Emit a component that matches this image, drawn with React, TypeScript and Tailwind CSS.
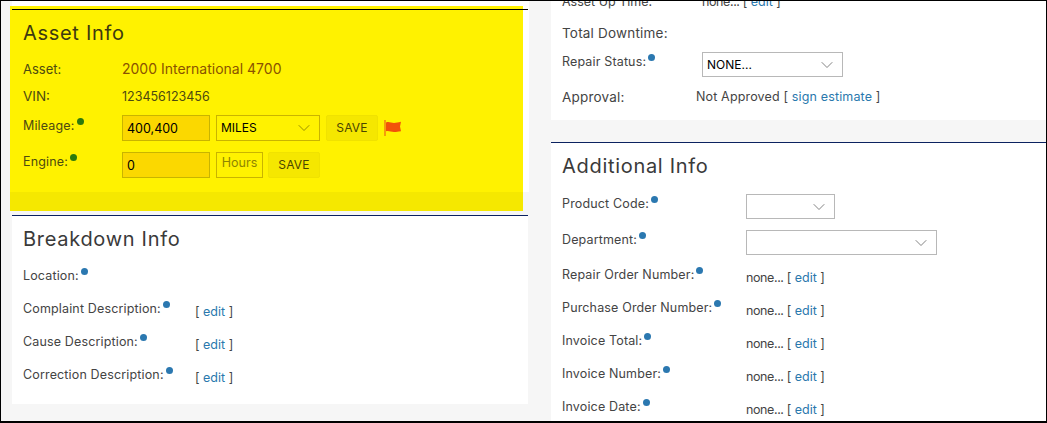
import { ChevronDown } from "lucide-react";

const FONT = "font-['Inter','Liberation_Sans',sans-serif]";

function Dot({ green }: { green?: boolean }) {
  return (
    <span
      className={`ml-[2px] inline-block h-[7px] w-[7px] -translate-y-[5px] rounded-full ${
        green ? "bg-[#2c7a0c]" : "bg-[#2b78b0]"
      }`}
    />
  );
}

function Label({ text, dot, green }: { text: string; dot?: boolean; green?: boolean }) {
  return (
    <span className="whitespace-nowrap tracking-[0.15px]">
      {text}
      {dot && <Dot green={green} />}
    </span>
  );
}

function Edit({ label = "edit" }: { label?: string }) {
  return (
    <span className="whitespace-nowrap text-[#444]">
      [ <span className="text-[#2a78ad]">{label}</span> ]
    </span>
  );
}

function None() {
  return <span className="tracking-[-0.4px] text-[#444]">none... </span>;
}

function Select({ value, w, yellow }: { value?: string; w: string; yellow?: boolean }) {
  return (
    <div
      className={`flex items-center justify-between pl-1 pr-[5px] text-[12px] text-black ${w} border ${
        yellow ? "h-[26px] border-[#c9b400]" : "h-[25px] border-[#b8b8b8]"
      }`}
    >
      <span>{value}</span>
      <ChevronDown size={20} strokeWidth={1.1} className={yellow ? "text-[#8f8500]" : "text-[#777]"} />
    </div>
  );
}

function EditRow({ label }: { label: string }) {
  return (
    <div className="flex h-[33px] items-start">
      <div className="w-[172px]">
        <Label text={label} dot />
      </div>
      <div className="pt-[3px]">
        <Edit />
      </div>
    </div>
  );
}

function SaveButton() {
  return (
    <div className="flex h-[26px] w-[52px] items-center justify-center rounded-[2px] border border-[#f0e200] bg-[#f5e700] text-[12px] tracking-[0.2px] text-[#4a4500]">
      SAVE
    </div>
  );
}

function AssetInfo() {
  return (
    <div className="ml-[11px] h-[213px] w-[517px] bg-[linear-gradient(white_191px,transparent_191px)] pt-[5px]">
      <div className="-ml-[2px] h-[205px] w-[513px] bg-[#fff200] text-[12.5px] text-[#4d4a10]">
        <div className="flex h-full flex-col pt-[3px]">
          <div className="ml-[2px] w-[516px] border-t border-black" />
          <h2 className="ml-[13px] mt-[10px] text-[20px] leading-[26px] tracking-[0.7px] text-[#3d3a10]">Asset Info</h2>
          <div className="ml-[13px] mt-[14px] flex h-[27px] leading-[18px]">
            <span className="w-[99px] text-[13px]">Asset:</span>
            <span className="text-[14px] text-[#8a5200]">2000 International 4700</span>
          </div>
          <div className="ml-[13px] flex h-[28px] leading-[19px]">
            <span className="w-[99px] text-[13.5px]">VIN:</span>
            <span>123456123456</span>
          </div>
          <div className="ml-[13px] flex h-[37px] items-start">
            <div className="w-[99px] pt-[2px]">
              <Label text="Mileage:" dot green />
            </div>
            <input
              readOnly
              value="400,400"
              className="h-[26px] w-[88px] border border-[#c9b400] bg-[#fbd800] px-1 text-[12.5px] text-black"
            />
            <div className="ml-[6px]">
              <Select value="MILES" w="w-[104px]" yellow />
            </div>
            <div className="ml-[6px]">
              <SaveButton />
            </div>
            <svg width="18" height="16" viewBox="0 0 18 16" className="ml-[6px] mt-[5px]">
              <path d="M1 0v16" stroke="#f07a10" strokeWidth="1.4" />
              <path d="M2 2.500c3-1.200 5 .5 8 .5 2.500 0 4-.6 7-1.200l-1 4.700 1 4.700c-3 .4-4.500 .8-7 .8-3 0-5-1.400-8-.8z" fill="#f2520a" />
            </svg>
          </div>
          <div className="ml-[13px] flex items-start">
            <div className="w-[99px] pt-[1px]">
              <Label text="Engine:" dot green />
            </div>
            <input
              readOnly
              value="0"
              className="h-[26px] w-[88px] border border-[#c9b400] bg-[#fbd800] px-1 text-[12.5px] text-black"
            />
            <div className="ml-[6px] flex h-[26px] w-[47px] items-center justify-center border border-[#c9b400] pb-[3px] text-[12.5px] text-[#8f8500]">
              Hours
            </div>
            <div className="ml-[5px]">
              <SaveButton />
            </div>
          </div>
          <div className="mt-auto h-[19px] bg-[#f5e800]" />
        </div>
      </div>
    </div>
  );
}

function BreakdownInfo() {
  return (
    <div className="ml-[11px] mt-[1px] h-[189px] w-[516px] border-t border-[#0b2260] bg-white pl-[11px] text-[12.5px] text-[#444]">
      <h2 className="mt-[10px] text-[20px] leading-[26px] tracking-[0.7px] text-[#3a3a3a]">Breakdown Info</h2>
      <div className="mt-[15px] h-[33px]">
        <Label text="Location:" dot />
      </div>
      <EditRow label="Complaint Description:" />
      <EditRow label="Cause Description:" />
      <EditRow label="Correction Description:" />
    </div>
  );
}

function TopRight() {
  return (
    <div className="h-[127px] bg-white pl-[11px] text-[12.5px] text-[#444]">
      <div className="-mt-[8px] flex h-[31px] items-start">
        <span className="w-[140px]">Asset Up Time:</span>
        <span>
          <None />
          <Edit />
        </span>
      </div>
      <div className="h-[28px] text-[13.5px] leading-[18px] tracking-[0.2px]">Total Downtime:</div>
      <div className="flex h-[36px] items-start">
        <div className="w-[140px] pt-[1px]">
          <Label text="Repair Status:" dot />
        </div>
        <Select value="NONE..." w="w-[141px]" />
      </div>
      <div className="flex h-[19px] items-center">
        <span className="w-[134px] text-[13.5px] tracking-[0.2px]">Approval:</span>
        <span className="tracking-[0.15px]">
          Not Approved <Edit label="sign estimate" />
        </span>
      </div>
    </div>
  );
}

function AdditionalInfo() {
  return (
    <div className="mt-[22px] h-[300px] border-t border-[#0b2260] bg-white pl-[11px] text-[12.5px] text-[#444]">
      <h2 className="mt-[10px] text-[20px] leading-[26px] tracking-[0.7px] text-[#3a3a3a]">Additional Info</h2>
      <div className="mt-[15px] flex h-[36px] items-start">
        <div className="w-[184px] pt-[1px]">
          <Label text="Product Code:" dot />
        </div>
        <Select w="w-[89px]" />
      </div>
      <div className="flex h-[36px] items-start">
        <div className="w-[184px] pt-[1px]">
          <Label text="Department:" dot />
        </div>
        <Select w="w-[191px]" />
      </div>
      {["Repair Order Number:", "Purchase Order Number:", "Invoice Total:", "Invoice Number:", "Invoice Date:"].map(
        (l) => (
          <div key={l} className="flex h-[33px] items-start">
            <div className="w-[184px]">
              <Label text={l} dot />
            </div>
            <div className="pt-[3px]">
              <None />
              <Edit />
            </div>
          </div>
        )
      )}
    </div>
  );
}

export default function App() {
  return (
    <div className={`flex h-[423px] w-[1047px] overflow-hidden border border-b-2 border-black bg-[#f6f6f6] ${FONT}`}>
      <div className="w-[550px] shrink-0">
        <AssetInfo />
        <BreakdownInfo />
      </div>
      <div className="flex-1">
        <TopRight />
        <AdditionalInfo />
      </div>
    </div>
  );
}
